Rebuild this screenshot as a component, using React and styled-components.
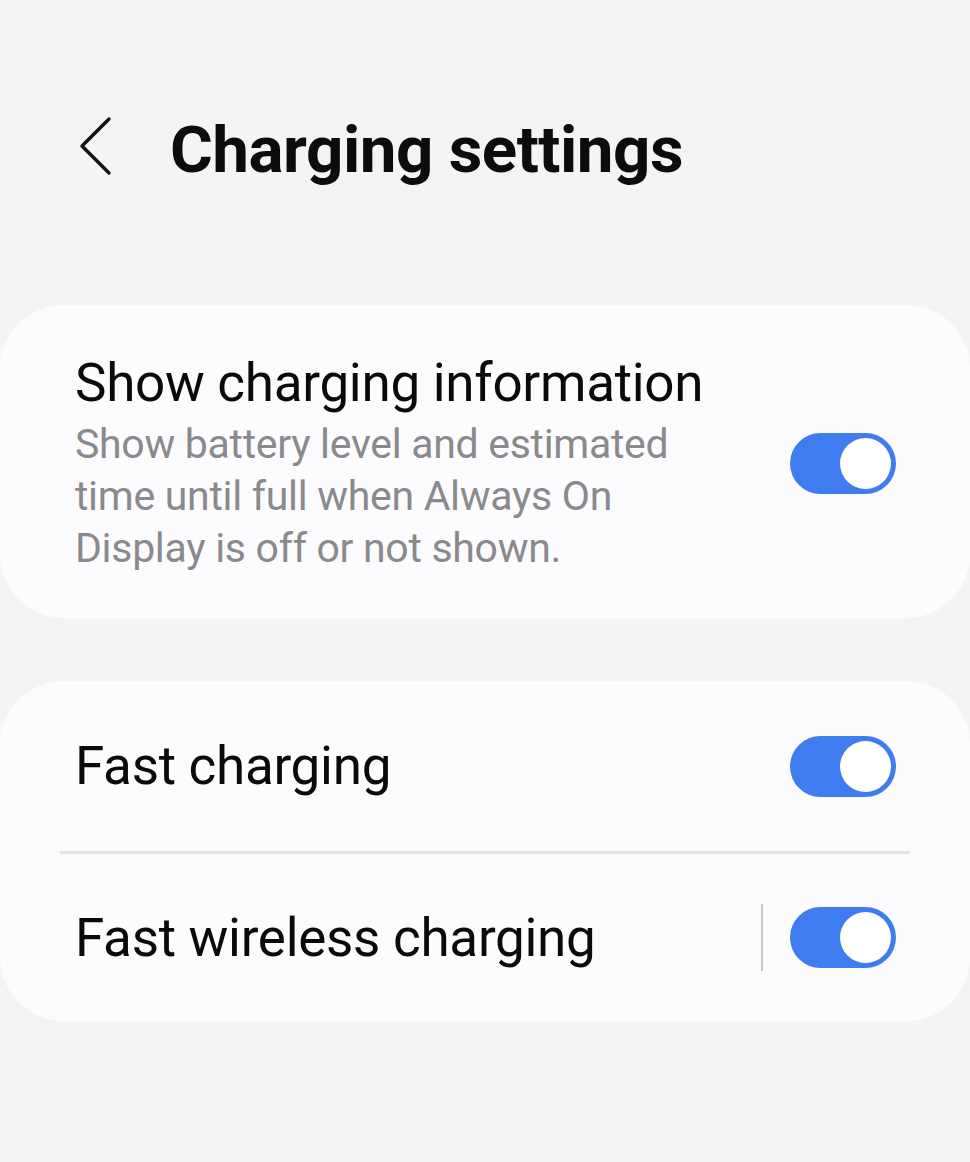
import React from "react";
import styled, { createGlobalStyle } from "styled-components";

const Global = createGlobalStyle`
  html, body { margin: 0; padding: 0; background: #f4f4f6; }
  body { font-family: Roboto, "Noto Sans", sans-serif; -webkit-font-smoothing: antialiased; }
`;

const Screen = styled.div`
  width: 970px;
  min-height: 1162px;
  background: #f4f4f6;
  display: flex;
  flex-direction: column;
`;

const Header = styled.header`
  height: 305px;
  box-sizing: border-box;
  padding: 110px 0 0 77px;
  display: flex;
  align-items: flex-start;
  gap: 57px;
`;

const BackButton = styled.button`
  border: 0;
  background: none;
  padding: 0;
  margin-top: 6px;
  width: 36px;
  height: 60px;
  display: flex;
  align-items: center;
  justify-content: center;
  cursor: pointer;
`;

const Title = styled.h1`
  margin: 0;
  font-family: Roboto, sans-serif;
  font-weight: 700;
  font-size: 65.5px;
  line-height: 80px;
  color: #0c0c0c;
  letter-spacing: -0.5px;
`;

const Card = styled.section`
  background: #fcfcfe;
  border-radius: 64px;
  margin-bottom: ${(p) => p.$gap || 0}px;
`;

const Row = styled.div`
  display: flex;
  align-items: center;
  padding: ${(p) => p.$pad};
  min-height: ${(p) => p.$height}px;
  box-sizing: border-box;
`;

const Texts = styled.div`
  flex: 1;
  min-width: 0;
`;

const Label = styled.div`
  font-size: 53px;
  line-height: 60px;
  color: #0a0a0a;
  letter-spacing: -0.3px;
`;

const Summary = styled.div`
  margin-top: 5px;
  font-size: 41px;
  line-height: 52px;
  color: #8a8a8c;
  width: 640px;
  letter-spacing: -0.3px;
`;

const Divider = styled.div`
  height: 3px;
  background: #e4e4e6;
  margin: 0 60px;
`;

const VLine = styled.div`
  width: 2px;
  height: 67px;
  background: #c9c9cb;
  margin-right: 27px;
`;

const Track = styled.div`
  width: 106px;
  height: 61px;
  border-radius: 31px;
  background: #3e7cf0;
  position: relative;
  flex-shrink: 0;
`;

const Knob = styled.div`
  position: absolute;
  right: 5px;
  top: 5px;
  width: 51px;
  height: 51px;
  border-radius: 50%;
  background: #ffffff;
`;

const Toggle = () => (
  <Track>
    <Knob />
  </Track>
);

export default function App() {
  return (
    <Screen>
      <Global />
      <Header>
        <BackButton aria-label="Back">
          <svg width="34" height="60" viewBox="0 0 34 60" fill="none">
            <path d="M31 3 L4 30 L31 57" stroke="#111" strokeWidth="3.4" strokeLinecap="round" strokeLinejoin="round" />
          </svg>
        </BackButton>
        <Title>Charging settings</Title>
      </Header>

      <Card $gap={63}>
        <Row $pad="48px 74px 44px 75px" $height={313}>
          <Texts>
            <Label>Show charging information</Label>
            <Summary>
              Show battery level and estimated time until full when Always On
              Display is off or not shown.
            </Summary>
          </Texts>
          <Toggle />
        </Row>
      </Card>

      <Card>
        <Row $pad="0 74px 0 75px" $height={170}>
          <Texts>
            <Label>Fast charging</Label>
          </Texts>
          <Toggle />
        </Row>
        <Divider />
        <Row $pad="0 74px 0 75px" $height={167}>
          <Texts>
            <Label>Fast wireless charging</Label>
          </Texts>
          <VLine />
          <Toggle />
        </Row>
      </Card>
    </Screen>
  );
}
